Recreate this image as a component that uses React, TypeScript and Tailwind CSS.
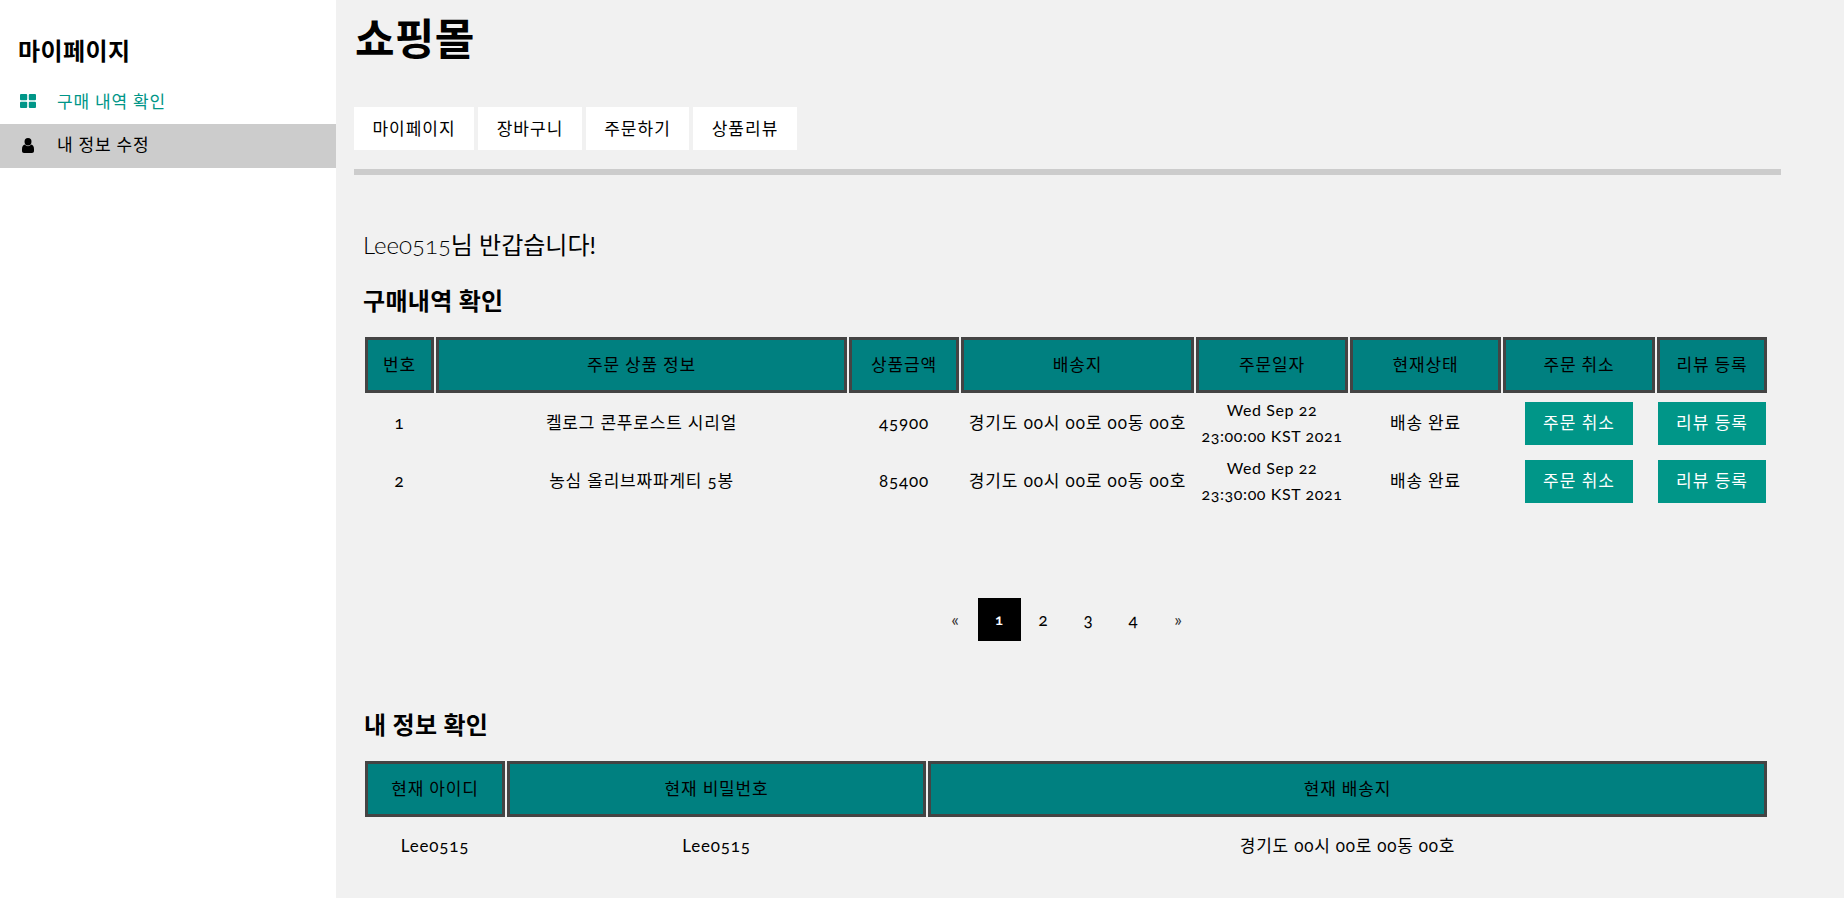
const FONT = "font-['Lato','Noto_Sans_CJK_KR',sans-serif]";

const Tab = ({ label, w }: { label: string; w: string }) => (
  <a className={`${w} flex h-[43px] items-center justify-center bg-white text-[17px] tracking-[1px] text-black`}>{label}</a>
);

const orderHeads = ["번호", "주문 상품 정보", "상품금액", "배송지", "주문일자", "현재상태", "주문 취소", "리뷰 등록"];
const orderWidths = ["w-[69px]", "w-[411px]", "w-[110px]", "w-[233px]", "w-[152px]", "w-[151px]", "w-[152px]", "w-[110px]"];

const orders = [
  { no: "1", name: "켈로그 콘푸로스트 시리얼", price: "45900", time: "23:00:00 KST 2021" },
  { no: "2", name: "농심 올리브짜파게티 5봉", price: "85400", time: "23:30:00 KST 2021" },
];

const Th = ({ children }: { children: string }) => (
  <th className="h-[56px] border-[3px] border-[#444444] bg-[#008080] p-0 text-center text-[17px] font-normal tracking-[0.8px] text-black">
    {children}
  </th>
);

const ActionButton = ({ label, w }: { label: string; w: string }) => (
  <button className={`${w} h-[43px] bg-[#009688] text-[17px] tracking-[1px] text-white`}>{label}</button>
);

const GridIcon = () => (
  <svg viewBox="0 0 16 14" className="ml-[20px] mr-[21px] h-[14px] w-[16px] fill-current">
    <rect x="0" y="0" width="7.2" height="6.2" rx="1" />
    <rect x="8.8" y="0" width="7.2" height="6.2" rx="1" />
    <rect x="0" y="7.8" width="7.2" height="6.2" rx="1" />
    <rect x="8.8" y="7.8" width="7.2" height="6.2" rx="1" />
  </svg>
);

const UserIcon = () => (
  <svg viewBox="0 0 12 15" className="ml-[22px] mr-[23px] h-[15px] w-[12px] fill-current">
    <ellipse cx="6" cy="3.7" rx="3.5" ry="3.7" />
    <path d="M3 6.6C1 7 0 8.6 0 11.2V13c0 1.2.8 2 2 2h8c1.2 0 2-.8 2-2v-1.8c0-2.6-1-4.2-3-4.6C8.2 7.6 7.2 8.2 6 8.2S3.8 7.6 3 6.6Z" />
  </svg>
);

export default function App() {
  return (
    <div className={`${FONT} flex min-h-[898px] bg-[#f1f1f1] font-normal text-black [font-variant-numeric:oldstyle-nums]`}>
      <aside className="w-[336px] shrink-0 bg-white">
        <h3 className="mb-[7px] flex h-[75px] items-end pb-[12px] pl-[18px] text-[24px] font-bold leading-none tracking-[0.4px]">마이페이지</h3>
        <a className="mb-[4px] flex h-[38px] items-center text-[17px] tracking-[0.8px] text-[#009688]">
          <GridIcon />
          <span className="pt-[1px]">구매 내역 확인</span>
        </a>
        <a className="flex h-[44px] items-center bg-[#cccccc] pb-[2px] text-[17px] tracking-[0.8px] text-black">
          <UserIcon />
          내 정보 수정
        </a>
      </aside>

      <main className="min-w-0 flex-1 pl-[18px] pr-[63px]">
        <h1 className="ml-[1px] flex h-[76px] items-center text-[43px] font-bold leading-none tracking-[0.3px]">쇼핑몰</h1>
        <nav className="mt-[31px] flex gap-[4px]">
          <Tab label="마이페이지" w="w-[120px]" />
          <Tab label="장바구니" w="w-[104px]" />
          <Tab label="주문하기" w="w-[103px]" />
          <Tab label="상품리뷰" w="w-[104px]" />
        </nav>
        <div className="mt-[19px] h-[6px] bg-[#cccccc]" />

        <section className="pl-[9px]">
          <p className="mt-[55px] text-[24px] leading-[30px]">
            <span className="font-light">Lee0515</span>님 반갑습니다!
          </p>
          <h2 className="mt-[26px] text-[24px] font-bold leading-[30px] tracking-[0.3px]">구매내역 확인</h2>

          <table className="mt-[19px] w-[1406px] table-fixed border-separate border-spacing-[2px] text-[17px]">
            <colgroup>
              {orderWidths.map((w, i) => (
                <col key={i} className={w} />
              ))}
            </colgroup>
            <thead>
              <tr>
                {orderHeads.map((h) => (
                  <Th key={h}>{h}</Th>
                ))}
              </tr>
            </thead>
            <tbody>
              {orders.map((o) => (
                <tr key={o.no} className="h-[56px] text-center align-middle tracking-[0.8px]">
                  <td>{o.no}</td>
                  <td>{o.name}</td>
                  <td>{o.price}</td>
                  <td className="whitespace-nowrap tracking-[0.9px]">경기도 00시 00로 00동 00호</td>
                  <td className="whitespace-nowrap text-[16px] leading-[26px] tracking-[0.6px]">
                    Wed Sep 22
                    <br />
                    {o.time}
                  </td>
                  <td>배송 완료</td>
                  <td>
                    <ActionButton label="주문 취소" w="w-[108px]" />
                  </td>
                  <td>
                    <ActionButton label="리뷰 등록" w="w-[108px]" />
                  </td>
                </tr>
              ))}
            </tbody>
          </table>

          <nav className="mt-[87px] flex h-[43px] items-center justify-center pr-[11px] text-[17px]">
            <a className="w-[45px] text-center text-[18px] text-[#333333]">«</a>
            <a className="flex h-[43px] w-[43px] items-center justify-center bg-black text-[15px] font-bold text-white">1</a>
            <a className="w-[45px] text-center">2</a>
            <a className="w-[45px] text-center">3</a>
            <a className="w-[45px] text-center">4</a>
            <a className="w-[45px] text-center text-[18px] text-[#333333]">»</a>
          </nav>

          <h2 className="ml-[1px] mt-[69px] text-[24px] font-bold leading-[30px] tracking-[0.3px]">내 정보 확인</h2>

          <table className="mt-[19px] w-[1406px] table-fixed border-separate border-spacing-[2px] text-[17px]">
            <colgroup>
              <col className="w-[140px]" />
              <col className="w-[419px]" />
              <col className="w-[839px]" />
            </colgroup>
            <thead>
              <tr>
                <Th>현재 아이디</Th>
                <Th>현재 비밀번호</Th>
                <Th>현재 배송지</Th>
              </tr>
            </thead>
            <tbody>
              <tr className="h-[54px] text-center tracking-[0.8px]">
                <td>Lee0515</td>
                <td>Lee0515</td>
                <td>경기도 00시 00로 00동 00호</td>
              </tr>
            </tbody>
          </table>
        </section>
      </main>
    </div>
  );
}
